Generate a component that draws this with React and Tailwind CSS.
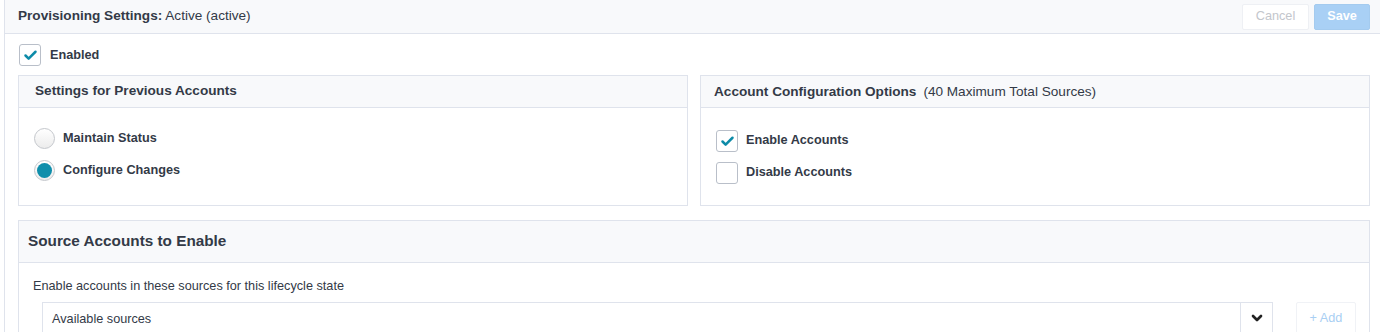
import { Check, ChevronDown } from 'lucide-react';

const Checkbox = ({ checked }) => (
  <span className="w-[22px] h-[22px] shrink-0 rounded-[3px] border border-[#b9bfc9] bg-white flex items-center justify-center">
    {checked && <Check className="w-[15px] h-[15px] text-[#0d8ba8]" strokeWidth={4} />}
  </span>
);

const Radio = ({ checked }) => (
  <span className="w-[21px] h-[21px] shrink-0 rounded-full border border-[#c4c7cc] bg-gradient-to-b from-white to-[#ececec] flex items-center justify-center">
    {checked && <span className="w-[15px] h-[15px] rounded-full bg-[#0f8eab]" />}
  </span>
);

const Panel = ({ title, pad, children }) => (
  <div className="flex-1 h-[131px] border border-[#dfe3ec] bg-white flex flex-col">
    <div className={`h-[32px] shrink-0 bg-[#f8f9fb] border-b border-[#dfe3ec] ${pad} flex items-center text-[13.6px] text-[#333a47]`}>
      {title}
    </div>
    {children}
  </div>
);

export default function App() {
  return (
    <div className="w-[1380px] h-[332px] overflow-hidden bg-white font-['Liberation_Sans',Arial,sans-serif] text-[#333a47]">
      <div className="ml-[4px] border-l border-[#dfe3ec] h-full">
        {/* Header */}
        <div className="h-[34px] bg-[#f8f9fb] border-b border-[#dfe3ec] pl-[13px] pr-[10px] flex items-center justify-between">
          <div className="text-[13.6px]">
            <span className="font-bold">Provisioning Settings:</span> Active (active)
          </div>
          <div className="flex items-center gap-[5px]">
            <button className="w-[67px] h-[26px] bg-white border border-[#eef0f4] text-[12.7px] text-[#c3c6cc] rounded-[2px]">Cancel</button>
            <button className="w-[56px] h-[26px] bg-[#a9d0f5] border border-[#a4cbef] text-[12.7px] font-bold text-white rounded-[2px]">Save</button>
          </div>
        </div>

        <div className="pl-[13px] pr-[10px]">
          <div className="h-[41px] pt-[10px] pl-[1px] flex items-start gap-[9px]">
            <Checkbox checked />
            <span className="text-[12.7px] font-bold leading-[22px]">Enabled</span>
          </div>

          <div className="flex gap-[12px]">
            <Panel pad="pl-[16px]" title={<span className="font-bold">Settings for Previous Accounts</span>}>
              <div className="pt-[20px] pl-[15px] flex flex-col gap-[11px]">
                <label className="flex items-center gap-[8px]">
                  <Radio />
                  <span className="text-[12.7px] font-bold">Maintain Status</span>
                </label>
                <label className="flex items-center gap-[8px]">
                  <Radio checked />
                  <span className="text-[12.7px] font-bold">Configure Changes</span>
                </label>
              </div>
            </Panel>
            <Panel pad="pl-[13px] pt-[2px]" title={<><span className="font-bold">Account Configuration Options</span><span className="ml-[7px]">(40 Maximum Total Sources)</span></>}>
              <div className="pt-[22px] pl-[15px] flex flex-col gap-[10px]">
                <label className="flex items-center gap-[8px]">
                  <Checkbox checked />
                  <span className="text-[12.7px] font-bold">Enable Accounts</span>
                </label>
                <label className="flex items-center gap-[8px]">
                  <Checkbox />
                  <span className="text-[12.7px] font-bold">Disable Accounts</span>
                </label>
              </div>
            </Panel>
          </div>

          <div className="mt-[14px] border border-[#dfe3ec] h-[140px]">
            <div className="h-[42px] bg-[#f8f9fb] border-b border-[#dfe3ec] pl-[9px] flex items-center text-[15.3px] font-bold">
              Source Accounts to Enable
            </div>
            <div className="pl-[14px] pt-[14px] text-[12.7px]">Enable accounts in these sources for this lifecycle state</div>
            <div className="mt-[6px] ml-[23px] flex items-start">
              <div className="w-[1231px] h-[40px] border border-[#dfe3ec] flex">
                <div className="flex-1 pl-[9px] pt-[7px] text-[12.7px]">Available sources</div>
                <div className="w-[32px] border-l border-[#dfe3ec] flex justify-center pt-[7px]">
                  <ChevronDown className="w-[16px] h-[16px] text-[#222]" strokeWidth={4} />
                </div>
              </div>
              <button className="ml-[23px] w-[60px] h-[32px] border border-[#f0f2f6] bg-white text-[12.7px] text-[#a9cff3] rounded-[2px]">+ Add</button>
            </div>
          </div>
        </div>
      </div>
    </div>
  );
}
